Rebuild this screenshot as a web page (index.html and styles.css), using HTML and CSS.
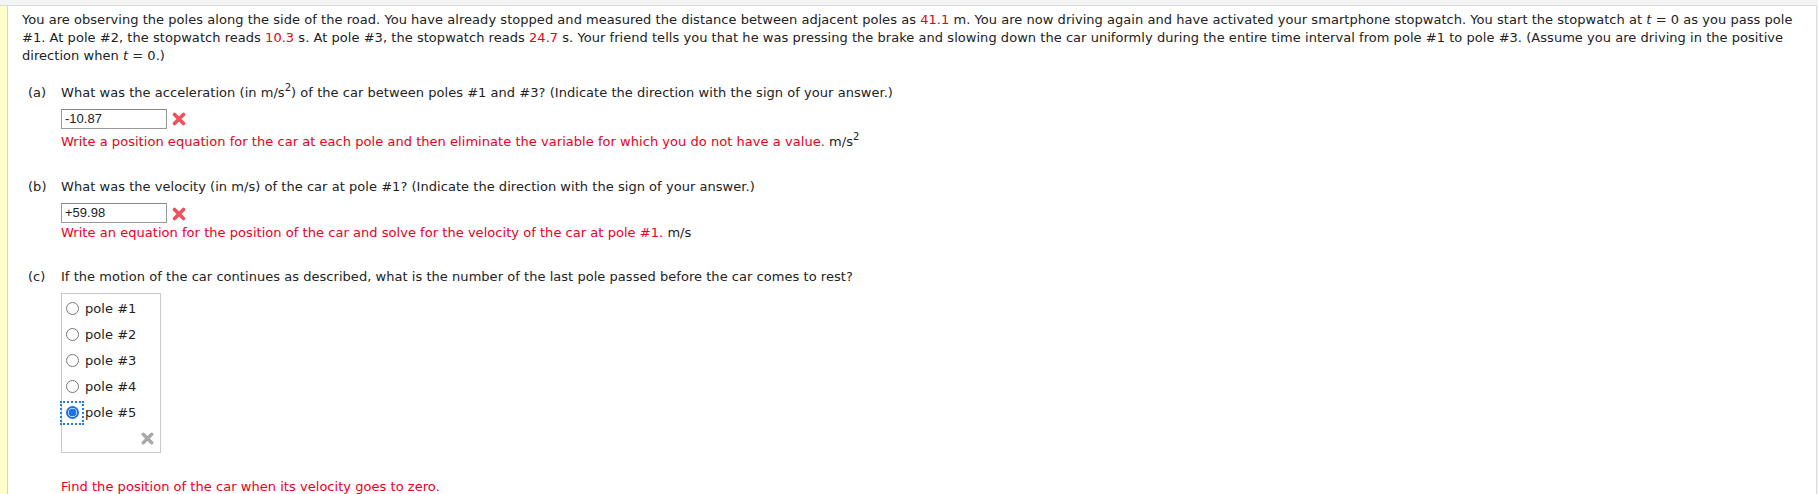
FILE: index.html
```html
<!DOCTYPE html>
<html>
<head>
<meta charset="utf-8">
<link rel="stylesheet" href="styles.css">
</head>
<body>
<div class="page">
  <div class="strip"></div>
  <div class="content">
    <p class="intro">You are observing the poles along the side of the road. You have already stopped and measured the distance between adjacent poles as <span class="num">41.1</span> m. You are now driving again and have activated your smartphone stopwatch. You start the stopwatch at <i>t</i> = 0 as you pass pole #1. At pole #2, the stopwatch reads <span class="num">10.3</span> s. At pole #3, the stopwatch reads <span class="num">24.7</span> s. Your friend tells you that he was pressing the brake and slowing down the car uniformly during the entire time interval from pole #1 to pole #3. (Assume you are driving in the positive direction when <i>t</i> = 0.)</p>

    <div class="part part-a">
      <div class="label">(a)</div>
      <div class="body">
        <div class="question">What was the acceleration (in m/s<sup>2</sup>) of the car between poles #1 and #3? (Indicate the direction with the sign of your answer.)</div>
        <div class="answer">
          <span class="field">-10.87</span>
          <svg class="wrong" viewBox="0 0 14 14" width="14" height="14"><path d="M2.5 2.5 L11.5 11.5 M11.5 2.5 L2.5 11.5" stroke="#f0505c" stroke-width="3.6" stroke-linecap="round"/></svg>
        </div>
        <div class="hint-line"><span class="hint">Write a position equation for the car at each pole and then eliminate the variable for which you do not have a value.</span> m/s<sup>2</sup></div>
      </div>
    </div>

    <div class="part part-b">
      <div class="label">(b)</div>
      <div class="body">
        <div class="question">What was the velocity (in m/s) of the car at pole #1? (Indicate the direction with the sign of your answer.)</div>
        <div class="answer">
          <span class="field">+59.98</span>
          <svg class="wrong" viewBox="0 0 14 14" width="14" height="14"><path d="M2.5 2.5 L11.5 11.5 M11.5 2.5 L2.5 11.5" stroke="#f0505c" stroke-width="3.6" stroke-linecap="round"/></svg>
        </div>
        <div class="hint-line"><span class="hint">Write an equation for the position of the car and solve for the velocity of the car at pole #1.</span> m/s</div>
      </div>
    </div>

    <div class="part part-c">
      <div class="label">(c)</div>
      <div class="body">
        <div class="question">If the motion of the car continues as described, what is the number of the last pole passed before the car comes to rest?</div>
        <div class="choices">
          <div class="option"><span class="radio-wrap"><span class="radio"></span></span><span class="opt-text">pole #1</span></div>
          <div class="option"><span class="radio-wrap"><span class="radio"></span></span><span class="opt-text">pole #2</span></div>
          <div class="option"><span class="radio-wrap"><span class="radio"></span></span><span class="opt-text">pole #3</span></div>
          <div class="option"><span class="radio-wrap"><span class="radio"></span></span><span class="opt-text">pole #4</span></div>
          <div class="option"><span class="radio-wrap focus"><span class="radio checked"></span></span><span class="opt-text">pole #5</span></div>
          <div class="mark-row">
            <svg class="gray-x" viewBox="0 0 13 13" width="13" height="13"><path d="M2.3 2.3 L10.7 10.7 M10.7 2.3 L2.3 10.7" stroke="#a8a8a8" stroke-width="3.4" stroke-linecap="round"/></svg>
          </div>
        </div>
        <div class="hint final">Find the position of the car when its velocity goes to zero.</div>
      </div>
    </div>
  </div>
</div>
</body>
</html>
```

FILE: styles.css
```css
html, body {
  margin: 0;
  padding: 0;
}
body {
  background: #f4f4f4;
  font-family: "DejaVu Sans", Verdana, sans-serif;
  font-size: 13px;
  color: #222;
}
.page {
  margin-top: 5px;
  margin-right: 1px;
  display: flex;
  background: #fff;
  border-top: 1px solid #dcdcdc;
  border-right: 1px solid #dcdcdc;
  min-height: 500px;
}
.strip {
  width: 7px;
  flex: none;
  background: #ffffcc;
  border-right: 1px solid #d6d6c4;
}
.content {
  flex: 1;
  padding: 5px 12px 0 14px;
  line-height: 18.2px;
  letter-spacing: 0.04px;
}
.intro {
  margin: 0;
}
.num {
  color: #e8001c;
}
i {
  font-style: oblique;
}
.part {
  display: flex;
  padding-left: 6px;
}
.part-a {
  margin-top: 18px;
}
.part-b {
  margin-top: 27px;
}
.part-c {
  margin-top: 26px;
}
.label {
  width: 33px;
  flex: none;
}
.body {
  flex: 1;
}
sup {
  font-size: 10px;
  line-height: 0;
  vertical-align: 6px;
}
.answer {
  display: flex;
  align-items: center;
  margin-top: 7px;
  height: 20px;
}
.field {
  box-sizing: border-box;
  width: 106px;
  height: 20px;
  border: 1px solid #999;
  border-top-color: #888;
  font-family: "Liberation Sans", Arial, sans-serif;
  font-size: 13px;
  line-height: 18px;
  padding-left: 3px;
  color: #222;
  letter-spacing: 0;
}
.wrong {
  margin-left: 5px;
  margin-top: 1px;
}
.hint-line {
  margin-top: 1px;
}
.hint {
  color: #e8001c;
}
.part-a .hint-line {
  margin-top: 4px;
}
.choices {
  box-sizing: border-box;
  width: 100px;
  margin-top: 6px;
  border: 1px solid #c8c8c8;
  padding: 2px 0 0 0;
}
.option {
  display: flex;
  align-items: center;
  height: 26px;
}
.radio-wrap {
  box-sizing: border-box;
  width: 24px;
  height: 24px;
  display: flex;
  align-items: center;
  justify-content: center;
  margin-left: -2px;
  margin-right: 1px;
  border: 2px dotted transparent;
}
.radio-wrap.focus {
  border-color: #1a7fe0;
}
.radio {
  box-sizing: border-box;
  width: 13px;
  height: 13px;
  border-radius: 50%;
  border: 1px solid #777;
  background: #fff;
}
.radio.checked {
  border: 2px solid #1a73e8;
  background: radial-gradient(circle, #1a73e8 0 3.6px, #fff 4.2px);
}
.opt-text {
  color: #222;
}
.mark-row {
  display: flex;
  justify-content: flex-end;
  padding: 6px 6px 7px 0;
}
.final {
  margin-top: 25px;
}
```
